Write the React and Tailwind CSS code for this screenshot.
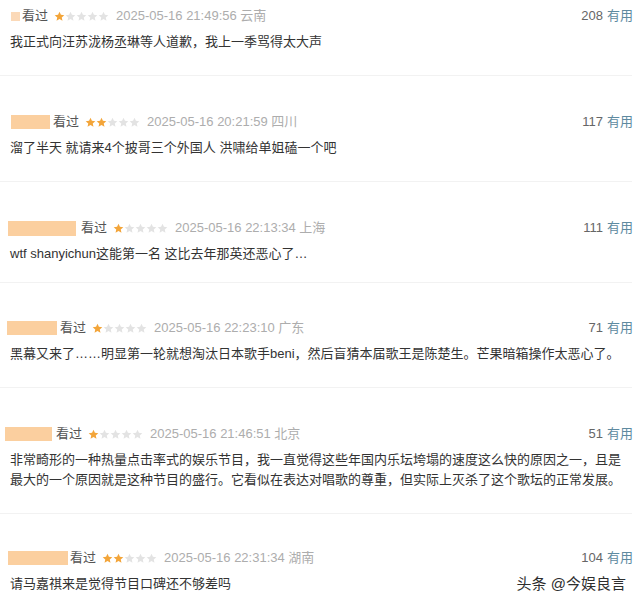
import React from 'react';

const reviews = [
  { ml: 11, bw: 9, bh: 9, gap: 2, stars: 1, date: '2025-05-16 21:49:56', loc: '云南', count: 208, lines: ['我正式向汪苏泷杨丞琳等人道歉，我上一季骂得太大声'], light: true, pt: 6, pb: 23 },
  { ml: 11, bw: 39, bh: 14, gap: 3, stars: 2, date: '2025-05-16 20:21:59', loc: '四川', count: 117, lines: ['溜了半天 就请来4个披哥三个外国人 洪啸给单姐磕一个吧'], pt: 36, pb: 23 },
  { ml: 8, bw: 68, bh: 15, gap: 5, stars: 1, date: '2025-05-16 22:13:34', loc: '上海', count: 111, lines: ['wtf shanyichun这能第一名 这比去年那英还恶心了…'], pt: 36, pb: 18 },
  { ml: 7, bw: 50, bh: 14, gap: 3, stars: 1, date: '2025-05-16 22:23:10', loc: '广东', count: 71, lines: ['黑幕又来了……明显第一轮就想淘汰日本歌手beni，然后盲猜本届歌王是陈楚生。芒果暗箱操作太恶心了。'], pt: 35, pb: 23 },
  { ml: 5, bw: 47, bh: 14, gap: 4, stars: 1, date: '2025-05-16 21:46:51', loc: '北京', count: 51, lines: ['非常畸形的一种热量点击率式的娱乐节目，我一直觉得这些年国内乐坛垮塌的速度这么快的原因之一，且是', '最大的一个原因就是这种节目的盛行。它看似在表达对唱歌的尊重，但实际上灭杀了这个歌坛的正常发展。'], pt: 36, pb: 23 },
  { ml: 8, bw: 60, bh: 14, gap: 2, stars: 2, date: '2025-05-16 22:31:34', loc: '湖南', count: 104, lines: ['请马嘉祺来是觉得节目口碑还不够差吗'], watermark: true, pt: 34, pb: 23 },
];

const Star = ({ on }) => (
  <svg width="11" height="11" viewBox="0 0 24 24" className="shrink-0">
    <polygon
      points="12,1.5 15.1,8.3 22.5,9 16.9,14 18.5,21.3 12,17.5 5.5,21.3 7.1,14 1.5,9 8.9,8.3"
      fill={on ? '#f3a53a' : '#e3e3e3'}
    />
  </svg>
);

const Review = ({ r }) => (
  <div className="border-b border-[#f2f2f2] mr-[8px]" style={{ paddingTop: r.pt, paddingBottom: r.pb }}>
    <div className="flex items-center justify-between h-5 text-[13px] leading-5">
      <div className="flex items-center">
        <div
          className={r.light ? 'bg-[#fbd9b8]' : 'bg-[#fbcf9f]'}
          style={{ marginLeft: r.ml, width: r.bw, height: r.bh, marginRight: r.gap }}
        />
        <span className="text-[#555]">看过</span>
        <div className="flex ml-[6px] mr-[7px]">
          {[0, 1, 2, 3, 4].map((i) => (
            <Star key={i} on={i < r.stars} />
          ))}
        </div>
        <span className="text-[#adadad]">{r.date} {r.loc}</span>
      </div>
      <div className="flex items-center gap-[4px] mr-[-1px]">
        <span className="text-[#666]">{r.count}</span>
        <span className="text-[#5e8aa0]">有用</span>
      </div>
    </div>
    <div className="mt-[6px] ml-[10px] text-[13px] leading-5 text-[#333]">
      {r.watermark ? (
        <div className="flex items-center justify-between">
          <span>{r.lines[0]}</span>
          <span className="text-[15px] text-[#2e2e2e] mr-[6px] [text-shadow:0_0_2px_#fff,0_0_2px_#fff]">头条 @今娱良言</span>
        </div>
      ) : (
        r.lines.map((l, i) => <div key={i}>{l}</div>)
      )}
    </div>
  </div>
);

export default function App() {
  return (
    <div
      className="w-[640px] h-[602px] overflow-hidden bg-white"
      style={{ fontFamily: '"Liberation Sans", "Noto Sans CJK SC", sans-serif' }}
    >
      {reviews.map((r, i) => (
        <Review key={i} r={r} />
      ))}
    </div>
  );
}
